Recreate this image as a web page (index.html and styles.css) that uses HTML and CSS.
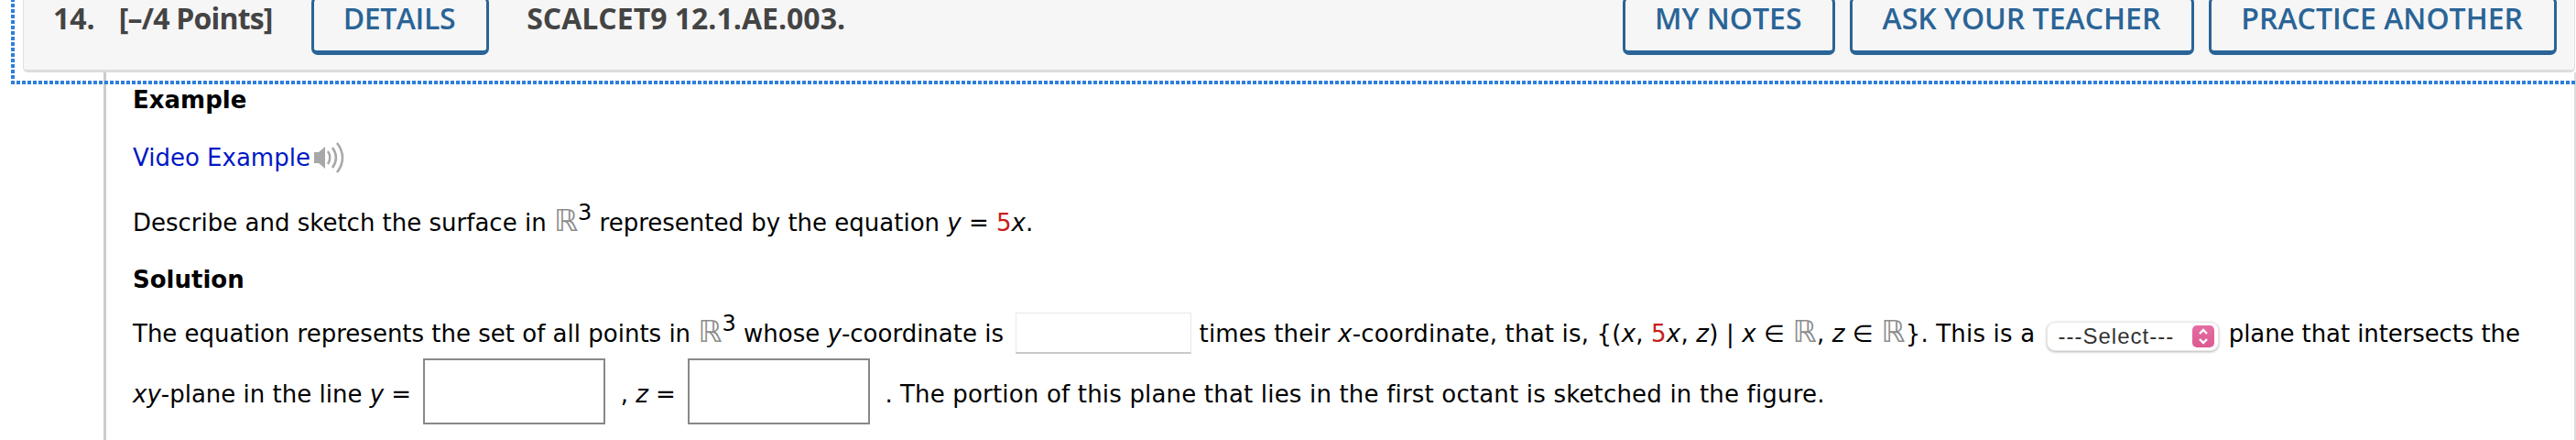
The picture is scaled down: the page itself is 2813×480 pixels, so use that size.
FILE: index.html
```html
<!DOCTYPE html>
<html lang="en">
<head>
<meta charset="utf-8">
<title>Question 14</title>
<link rel="stylesheet" href="styles.css">
</head>
<body>
<div class="focus-ring"></div>
<header class="qhead">
  <span class="num">14.</span>
  <span class="pts">[–/4 Points]</span>
  <a class="btn details">DETAILS</a>
  <span class="code">SCALCET9 12.1.AE.003.</span>
  <span class="spacer"></span>
  <div class="actions">
    <a class="btn">MY NOTES</a>
    <a class="btn">ASK YOUR TEACHER</a>
    <a class="btn">PRACTICE ANOTHER</a>
  </div>
</header>
<main class="qbody">
  <p class="title">Example</p>
  <p class="video"><a>Video Example</a><svg class="speaker" viewBox="0 0 34 34" aria-hidden="true"><path class="cone" d="M1 11h5l7-6v24l-7-6H1z"/><path class="wave" d="M16 10c3 4 3 10 0 14"/><path class="wave" d="M21 6c5 7 5 15 0 22"/><path class="wave" d="M26 1c8 10 8 22 0 32"/></svg></p>
  <p class="desc">Describe and sketch the surface in <span class="bb">ℝ</span><sup>3</sup> represented by the equation <i>y</i> = <span class="red">5</span><i>x</i>.</p>
  <p class="title sol">Solution</p>
  <p class="answer">The equation represents the set of all points in <span class="bb">ℝ</span><sup>3</sup> whose <i>y</i>-coordinate is <input class="blank-locked" type="text" aria-label="times"> <span class="wide">times their <i>x</i>-coordinate, that is, {(<i>x</i>, <span class="red">5</span><i>x</i>, <i>z</i>) | <i>x</i> ∈ <span class="bb">ℝ</span>, <i>z</i> ∈ <span class="bb">ℝ</span>}. This is a</span> <span class="select">---Select---<svg class="sel-icon" viewBox="0 0 24 24" aria-hidden="true"><defs><linearGradient id="pink" x1="0" y1="0" x2="0" y2="1"><stop offset="0" stop-color="#e56da3"/><stop offset="1" stop-color="#db5a91"/></linearGradient></defs><rect width="24" height="24" rx="5" fill="url(#pink)"/><path d="M8 9l4-4 4 4M8 15l4 4 4-4"/></svg></span> <span class="tight">plane that intersects the</span> <i class="nowrap">xy</i><span class="nowrap">-plane</span> in the line <i>y</i> = <input class="blank first" type="text" aria-label="y"> , <i>z</i> = <input class="blank last" type="text" aria-label="z"> . <span class="wide">The portion of this plane that lies in the first octant is sketched in the figure.</span></p>
</main>
</body>
</html>
```

FILE: styles.css
```css
html, body { margin: 0; padding: 0; background: #fff; }
body { position: relative; height: 480px; overflow: hidden; font-family: "DejaVu Sans", sans-serif; font-size: 26px; color: #000; }

.focus-ring {
  position: absolute; top: 0; left: 12px; right: 0; height: 92px; pointer-events: none;
  background:
    repeating-linear-gradient(90deg, #2f7fdc 0 4px, transparent 4px 6px) left bottom / 100% 4px no-repeat,
    repeating-linear-gradient(0deg, #2f7fdc 0 4px, transparent 4px 6px) left bottom / 4px 100% no-repeat;
}

.qhead {
  display: flex; align-items: flex-start; box-sizing: border-box;
  margin-left: 25px; margin-right: 1px; height: 79px; padding: 0 19px 0 32px;
  background: #f6f6f6; border-bottom: 3px solid #ddd; border-left: 1px solid #e2e2e2; border-right: 1px solid #e2e2e2;
  border-radius: 0 0 5px 5px;
  font-family: "Open Sans", sans-serif; font-size: 32px; font-weight: 600; line-height: 40px; color: #444;
}
.num { margin-right: 26px; font-weight: 700; }
.pts { margin-right: 42px; font-weight: 700; letter-spacing: -0.8px; }
.code { margin-left: 41px; font-weight: 700; }
.spacer { flex: 1; }
.actions { display: flex; gap: 16px; }
.btn {
  display: block; box-sizing: border-box; height: 64px; margin-top: -4px; padding: 1px 34px 0 32px;
  border: 3px solid #2a6496; border-bottom-width: 5px; border-radius: 7px; color: #2a6496;
}
.details { letter-spacing: -0.4px; }

.qbody { margin-left: 113px; margin-right: 0; height: 401px; box-sizing: border-box; padding: 10px 0 0 29px; border-left: 3px solid #ccc; border-right: 2px solid #ddd; line-height: 40px; }
.qbody p { margin: 0; }
.title { font-weight: 700; }
.video { margin-top: 23px !important; display: flex; align-items: center; }
.video a { color: #0018c4; }
.speaker { width: 34px; height: 34px; margin-left: 3px; }
.cone { fill: #a8a8a8; }
.wave { fill: none; stroke: #a8a8a8; stroke-width: 2.6; }
.desc { margin-top: 31px !important; }
.sol { margin-top: 22px !important; }
.answer { margin-top: 16px !important; }
.bb { font-family: "DejaVu Sans", sans-serif; font-size: 33px; line-height: 0; color: #8c8c8c; }
sup { font-size: 24px; line-height: 0; vertical-align: 12px; }
.red { color: #c8201a; }
.nowrap { white-space: nowrap; }
.wide { letter-spacing: 0.18px; }
.tight { letter-spacing: -0.1px; }

input { padding: 0; margin: 0; background: #fff; outline: none; box-sizing: border-box; }
.blank-locked { width: 192px; height: 45px; margin: 0 0 0 5px; border: 1px solid #e8e8e8; border-bottom: 2px solid #c9c9c9; vertical-align: 5px; }
.blank { width: 199px; height: 72px; margin: 5px 5px 0; border: 2px solid #888; vertical-align: 7px; }
.blank.first { margin-right: 8px; }
.blank.last { margin-right: 8px; }

.select {
  display: inline-flex; align-items: center; justify-content: space-between; box-sizing: border-box;
  width: 188px; height: 32px; padding: 0 4px 0 12px; margin: 0 3px 0 4px;
  border: 1px solid #e6e6e6; border-radius: 9px; box-shadow: 0 1px 3px rgba(0,0,0,.3); background: #fff;
  font-family: "Liberation Sans", sans-serif; font-size: 24px; letter-spacing: 1px; line-height: 28px; color: #333; vertical-align: -2px;
}
.sel-icon { width: 24px; height: 24px; }
.sel-icon path { fill: none; stroke: #fff; stroke-width: 2.4; }
```
